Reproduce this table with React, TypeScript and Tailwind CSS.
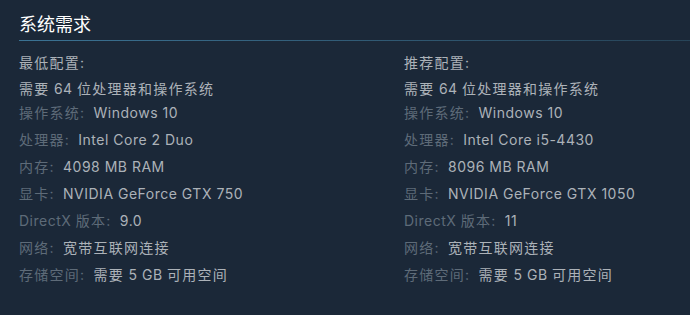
import React from 'react';

const font = 'Inter, "Noto Sans CJK SC", sans-serif';

type Spec = { label: string; value: string };

const minimum: Spec[] = [
  { label: '操作系统:', value: 'Windows 10' },
  { label: '处理器:', value: 'Intel Core 2 Duo' },
  { label: '内存:', value: '4098 MB RAM' },
  { label: '显卡:', value: 'NVIDIA GeForce GTX 750' },
  { label: 'DirectX 版本:', value: '9.0' },
  { label: '网络:', value: '宽带互联网连接' },
  { label: '存储空间:', value: '需要 5 GB 可用空间' },
];

const recommended: Spec[] = [
  { label: '操作系统:', value: 'Windows 10' },
  { label: '处理器:', value: 'Intel Core i5-4430' },
  { label: '内存:', value: '8096 MB RAM' },
  { label: '显卡:', value: 'NVIDIA GeForce GTX 1050' },
  { label: 'DirectX 版本:', value: '11' },
  { label: '网络:', value: '宽带互联网连接' },
  { label: '存储空间:', value: '需要 5 GB 可用空间' },
];

// CJK glyphs sit a little wider than the latin ones in the original
function Txt({ children }: { children: string }) {
  const parts = children.split(/([\u3000-\u9fff]+)/);
  return (
    <>
      {parts.map((p, i) =>
        i % 2 === 1 ? (
          <span key={i} className="tracking-[1.25px]">{p}</span>
        ) : (
          p
        )
      )}
    </>
  );
}

function ReqColumn({ title, specs }: { title: string; specs: Spec[] }) {
  return (
    <div className="flex flex-col text-[14px] leading-[18px] tracking-[0.5px] text-[#acb2b8]">
      <div className="mb-[8px]"><Txt>{title}</Txt></div>
      <div className="mb-[6px]"><Txt>需要 64 位处理器和操作系统</Txt></div>
      {specs.map((s, i) => (
        <div key={i} className="mb-[9px]">
          <span className="text-[#5e6b78] mr-[9px]"><Txt>{s.label}</Txt></span>
          <Txt>{s.value}</Txt>
        </div>
      ))}
    </div>
  );
}

export default function App() {
  return (
    <div className="w-[690px] h-[315px] bg-[#1b2838] px-[19px] pt-[13px]" style={{ fontFamily: font }}>
      <h2 className="text-[18px] leading-[24px] text-white pb-[3px]">系统需求</h2>
      <div className="h-px -mr-[19px] bg-gradient-to-r from-[#3b7394] to-[#274458]" />
      <div className="grid grid-cols-[385px_1fr] pt-[13px]">
        <ReqColumn title="最低配置:" specs={minimum} />
        <ReqColumn title="推荐配置:" specs={recommended} />
      </div>
    </div>
  );
}
